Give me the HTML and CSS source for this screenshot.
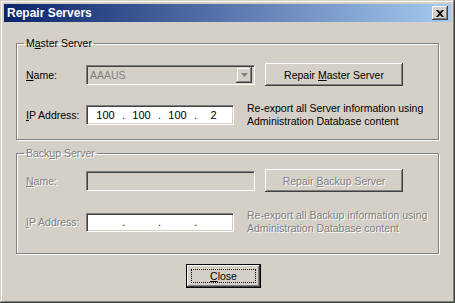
FILE: index.html
```html
<!DOCTYPE html>
<html lang="en">
<head>
    <meta charset="UTF-8">
    <title>Repair Servers</title>
    <link rel="stylesheet" href="styles.css">
</head>
<body>
    <div class="window">
        <div class="titlebar">
            <span class="title">Repair Servers</span>
            <span class="close-box">
                <svg width="8" height="7" viewBox="0 0 8 7"><path d="M0 0h2l2 2 2-2h2L5 3.5 8 7H6L4 5 2 7H0l3-3.5z" fill="#000"/></svg>
            </span>
        </div>

        <fieldset class="group master">
            <legend>M<u>a</u>ster Server</legend>
            <div class="row">
                <label class="label"><u>N</u>ame:</label>
                <div class="combo">
                    <span class="combo-text">AAAUS</span>
                    <span class="combo-arrow">
                        <svg width="7" height="4" viewBox="0 0 7 4"><path d="M0 0h7L3.5 4z" fill="#808080"/></svg>
                    </span>
                </div>
                <button class="btn">Repair <u>M</u>aster Server</button>
            </div>
            <div class="row row-ip">
                <label class="label"><u>I</u>P Address:</label>
                <div class="ip">
                    <span class="octet">100</span><span class="dot">.</span>
                    <span class="octet">100</span><span class="dot">.</span>
                    <span class="octet">100</span><span class="dot">.</span>
                    <span class="octet">2</span>
                </div>
                <p class="note">Re-export all Server information using<br>Administration Database content</p>
            </div>
        </fieldset>

        <fieldset class="group backup disabled">
            <legend>Back<u>u</u>p Server</legend>
            <div class="row">
                <label class="label"><u>N</u>ame:</label>
                <div class="field"></div>
                <button class="btn">Repair <u>B</u>ackup Server</button>
            </div>
            <div class="row row-ip">
                <label class="label"><u>I</u>P Address:</label>
                <div class="ip">
                    <span class="octet"></span><span class="dot">.</span>
                    <span class="octet"></span><span class="dot">.</span>
                    <span class="octet"></span><span class="dot">.</span>
                    <span class="octet"></span>
                </div>
                <p class="note">Re-export all Backup information using<br>Administration Database content</p>
            </div>
        </fieldset>

        <div class="footer">
            <button class="btn btn-default"><span class="focus"><u>C</u>lose</span></button>
        </div>
    </div>
</body>
</html>
```

FILE: styles.css
```css
body {
    margin: 0;
    font-family: 'Liberation Sans', Arial, sans-serif;
    font-size: 10.5px;
    color: #000;
}

.window {
    width: 455px;
    height: 303px;
    box-sizing: border-box;
    padding: 4px;
    background: #d4d0c8;
    box-shadow: inset -1px -1px #404040, inset 1px 1px #d4d0c8,
                inset -2px -2px #808080, inset 2px 2px #fff;
}

.titlebar {
    height: 18px;
    display: flex;
    align-items: center;
    justify-content: space-between;
    padding: 0 3px 0 3px;
    background: linear-gradient(to right, #0a246a, #a6caf0);
}

.title {
    color: #fff;
    font-weight: bold;
    font-size: 12px;
}

.close-box {
    width: 16px;
    height: 14px;
    box-sizing: border-box;
    display: flex;
    align-items: center;
    justify-content: center;
    background: #d4d0c8;
    box-shadow: inset -1px -1px #404040, inset 1px 1px #fff,
                inset -2px -2px #808080;
}

.group {
    margin: 15px 12px 0 12px;
    padding: 0 0 0 9px;
    border: 1px solid #808080;
    box-shadow: inset 1px 1px #fff, 1px 1px #fff;
    min-width: 0;
}

.group legend {
    padding: 0 2px;
    margin-left: -2px;
    line-height: 13px;
}

.master {
    padding-top: 13px;
    padding-bottom: 11px;
}

.backup {
    margin-top: 7px;
    padding-top: 9px;
    padding-bottom: 18px;
}

.row {
    display: flex;
    align-items: center;
}

.master .row-ip {
    margin-top: 16px;
}

.backup .row-ip {
    margin-top: 17px;
}

.label {
    width: 60px;
    flex-shrink: 0;
}

.combo, .field, .ip {
    box-sizing: border-box;
    flex-shrink: 0;
    height: 20px;
    border: 1px solid;
    border-color: #808080 #fff #fff #808080;
    box-shadow: inset 1px 1px #404040, inset -1px -1px #d4d0c8;
}

.combo, .field {
    width: 169px;
}

.combo {
    display: flex;
    align-items: center;
    justify-content: space-between;
    padding: 2px;
    color: #808080;
}

.combo-text {
    padding-left: 1px;
}

.combo-arrow {
    width: 16px;
    height: 16px;
    box-sizing: border-box;
    display: flex;
    align-items: center;
    justify-content: center;
    box-shadow: inset -1px -1px #404040, inset 1px 1px #d4d0c8,
                inset -2px -2px #808080, inset 2px 2px #fff;
}

.ip {
    width: 148px;
    display: flex;
    align-items: center;
    padding-left: 2px;
    background: #fff;
    font-size: 11px;
}

.octet {
    width: 33px;
    text-align: center;
}

.dot {
    width: 3px;
}

.btn {
    box-sizing: border-box;
    flex-shrink: 0;
    width: 138px;
    height: 23px;
    margin-left: 10px;
    padding: 0;
    border: none;
    background: #d4d0c8;
    font: inherit;
    color: #000;
    box-shadow: inset -1px -1px #404040, inset 1px 1px #fff,
                inset -2px -2px #808080, inset 2px 2px #d4d0c8;
}

.note {
    margin: 0 0 0 13px;
    line-height: 13px;
    white-space: nowrap;
}

.disabled legend,
.disabled .label,
.disabled .btn,
.disabled .note {
    color: #808080;
    text-shadow: 1px 1px #fff;
}

.disabled .field {
    background: #d4d0c8;
}

.disabled .row-ip .ip {
    height: 19px;
}

.footer {
    display: flex;
    padding: 10px 0 0 182px;
}

.btn-default {
    width: 75px;
    height: 24px;
    margin: 0;
    padding: 4px;
    border: 1px solid #000;
    box-shadow: inset -1px -1px #404040, inset 1px 1px #fff,
                inset -2px -2px #808080;
}

.focus {
    display: block;
    height: 100%;
    box-sizing: border-box;
    border: 1px dotted #000;
    line-height: 12px;
}
```
